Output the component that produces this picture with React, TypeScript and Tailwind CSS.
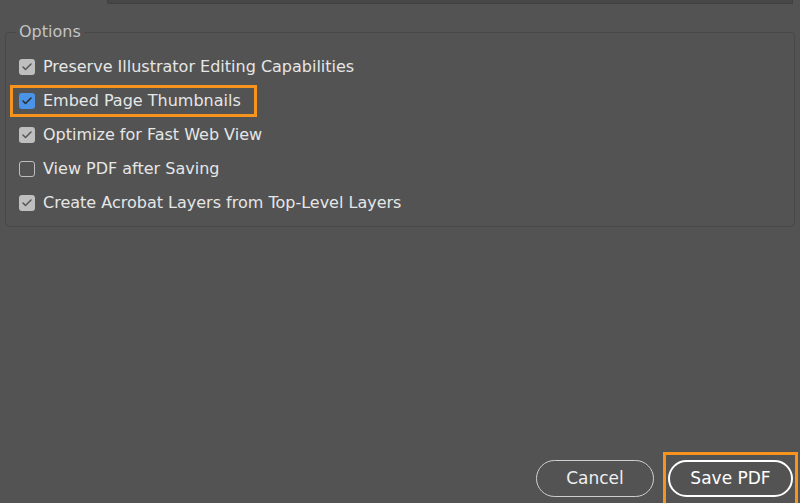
import { Check } from "lucide-react";

type Opt = { label: string; state: "gray" | "blue" | "off"; highlight?: boolean };

const options: Opt[] = [
  { label: "Preserve Illustrator Editing Capabilities", state: "gray" },
  { label: "Embed Page Thumbnails", state: "blue", highlight: true },
  { label: "Optimize for Fast Web View", state: "gray" },
  { label: "View PDF after Saving", state: "off" },
  { label: "Create Acrobat Layers from Top-Level Layers", state: "gray" },
];

function Box({ state }: { state: Opt["state"] }) {
  if (state === "off") {
    return <span className="w-[16px] h-[16px] rounded-[3px] border border-[#bdbdbd] shrink-0" />;
  }
  return (
    <span
      className={
        "w-[16px] h-[16px] rounded-[3px] shrink-0 flex items-center justify-center " +
        (state === "blue" ? "bg-[#4b93e6]" : "bg-[#bfbfbf]")
      }
    >
      <Check size={12} strokeWidth={3} className={state === "blue" ? "text-[#2a2a2a]" : "text-[#555555]"} />
    </span>
  );
}

export default function App() {
  return (
    <div
      className="w-[800px] h-[503px] bg-[#535353] overflow-hidden flex flex-col"
      style={{ fontFamily: '"DejaVu Sans", sans-serif' }}
    >
      <div className="flex pl-[107px] pr-[7px]">
        <div className="h-[4px] flex-1 bg-[#474747] border-x border-b border-[#3f3f3f] rounded-b-[2px]" />
      </div>

      <fieldset className="mx-[5px] mt-[18px] h-[205px] border border-[#484848] rounded-[4px] pl-[10px] pr-2 pb-3">
        <legend className="px-[3px] text-[16px] text-[#c4c4c4] leading-[20px]">Options</legend>
        <div className="flex flex-col pt-[8px]">
          {options.map((o) => (
            <div key={o.label} className="h-[34px] flex items-center">
              <div
                className={
                  "flex items-center gap-[8px] h-[32px] " +
                  (o.highlight ? "-ml-[6px] pl-[6px] w-[247px] border-[3px] border-[#f7941d]" : "pl-[3px]")
                }
              >
                <Box state={o.state} />
                <span className="text-[16px] text-[#e6e6e6] whitespace-nowrap">{o.label}</span>
              </div>
            </div>
          ))}
        </div>
      </fieldset>

      <div className="flex-1" />

      <div className="flex justify-end items-end gap-[9px] pr-[2px]">
        <div className="mb-[6px] h-[37px] w-[118px] rounded-full border-[1.5px] border-[#cfcfcf] flex items-center justify-center text-[17px] text-[#eeeeee]">
          Cancel
        </div>
        <div className="border-[3px] border-b-0 border-[#f7941d] pt-[5px] pb-[6px] px-[2px] w-[135px] flex">
          <div className="h-[37px] flex-1 rounded-full border-2 border-white flex items-center justify-center text-[17px] text-white">
            Save PDF
          </div>
        </div>
      </div>
    </div>
  );
}
